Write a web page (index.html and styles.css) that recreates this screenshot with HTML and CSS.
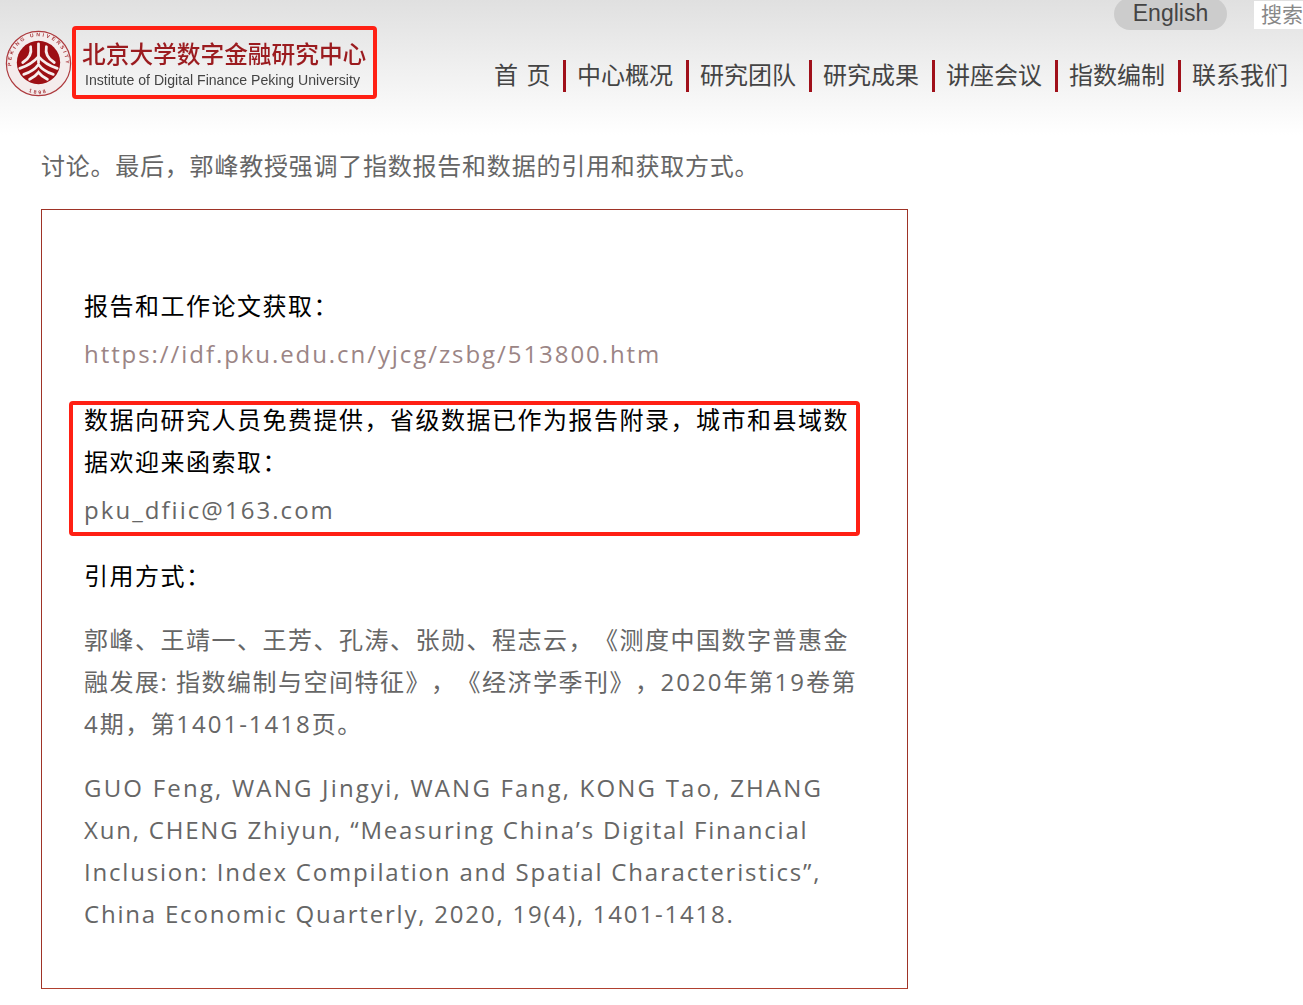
FILE: index.html
```html
<!DOCTYPE html>
<html lang="zh-CN">
<head>
<meta charset="utf-8">
<title>北京大学数字金融研究中心</title>
<link rel="stylesheet" href="styles.css">
</head>
<body>
<header class="site-header">
  <div class="brand">
    <svg class="seal" viewBox="0 0 68 68" aria-hidden="true">
      <defs>
        <path id="ring-top" d="M34 61.6a27.6 27.6 0 1 1 0 -55.2a27.6 27.6 0 1 1 0 55.2"/>
        <path id="ring-bottom" d="M8 34 a26 31 0 0 0 52 0"/>
      </defs>
      <circle cx="34" cy="34" r="32.6" fill="#f4ecec" stroke="#ad3a3e" stroke-width="1.2"/>
      <text class="seal-text" text-anchor="middle"><textPath href="#ring-top" startOffset="50%">PEKING UNIVERSITY</textPath></text>
      <text class="seal-text" text-anchor="middle"><textPath href="#ring-bottom" startOffset="50%">1898</textPath></text>
      <circle cx="34" cy="33" r="22" fill="#9d0f14"/>
      <g fill="none" stroke="#f7eeee" stroke-width="2.8" stroke-linecap="round">
        <path d="M34 14V33"/>
        <path d="M26 17Q28 27 18 33"/>
        <path d="M42 17Q40 27 50 33"/>
        <path d="M15 39Q27 35 34 27Q41 35 53 39"/>
        <path d="M19 45Q29 42 34 35Q39 42 49 45"/>
        <path d="M25 50Q31 47 34 43Q37 47 43 50"/>
      </g>
    </svg>
    <div class="brand-text">
      <div class="brand-zh">北京大学数字金融研究中心</div>
      <div class="brand-en">Institute of Digital Finance Peking University</div>
    </div>
  </div>
  <div class="header-right">
    <div class="tools">
      <a class="lang">English</a>
      <div class="search">搜索</div>
    </div>
    <nav class="nav">
      <a class="nav-item">首 页</a>
      <a class="nav-item">中心概况</a>
      <a class="nav-item">研究团队</a>
      <a class="nav-item">研究成果</a>
      <a class="nav-item">讲座会议</a>
      <a class="nav-item">指数编制</a>
      <a class="nav-item">联系我们</a>
    </nav>
  </div>
</header>
<main class="content">
  <p class="intro">讨论。最后，郭峰教授强调了指数报告和数据的引用和获取方式。</p>
  <section class="panel">
    <p class="label">报告和工作论文获取：</p>
    <p class="value link">https://idf.pku.edu.cn/yjcg/zsbg/513800.htm</p>
    <p class="label gap">数据向研究人员免费提供，省级数据已作为报告附录，城市和县域数据欢迎来函索取：</p>
    <p class="value">pku_dfiic@163.com</p>
    <p class="label gap">引用方式：</p>
    <p class="cite">郭峰、王靖一、王芳、孔涛、张勋、程志云，《测度中国数字普惠金融发展: 指数编制与空间特征》，《经济学季刊》，<span class="num">2020</span>年第<span class="num">19</span>卷第<span class="num">4</span>期，第<span class="num">1401-1418</span>页。</p>
    <p class="cite cite-en"><span class="caps">GUO Feng, WANG Jingyi, WANG Fang, KONG Tao, ZHANG</span> Xun, CHENG Zhiyun, “Measuring China’s Digital Financial Inclusion: Index Compilation and Spatial Characteristics”, China Economic Quarterly, 2020, 19(4), 1401-1418.</p>
  </section>
</main>
<div class="mark mark-logo"></div>
<div class="mark mark-data"></div>
</body>
</html>
```
FILE: styles.css
```css
* { box-sizing: border-box; }
html, body { margin: 0; padding: 0; }
body {
  width: 1303px;
  height: 1005px;
  overflow: hidden;
  position: relative;
  background: #fff;
  font-family: "Open Sans", "Noto Sans CJK SC", sans-serif;
  font-size: 24px;
  color: #666;
  text-spacing-trim: space-all;
}
p { margin: 0; }

.site-header {
  height: 135px;
  display: flex;
  justify-content: space-between;
  background: linear-gradient(#e0e0e0, #fff);
}
.brand {
  display: flex;
  align-items: flex-start;
  padding: 30px 0 0 5px;
}
.seal { width: 67px; height: 67px; display: block; flex: none; filter: blur(0.35px); }
.seal-text { font: bold 5.2px "Liberation Sans", sans-serif; fill: #a9383c; letter-spacing: 2.3px; }
.brand-text { margin: 8px 0 0 10px; width: 290px; filter: blur(0.35px); }
.brand-zh {
  font: 500 23.7px/30px "Noto Sans CJK SC", sans-serif;
  color: #9b1b1f;
  white-space: nowrap;
}
.brand-en {
  margin: 3px 0 0 3px;
  font: 14.1px/18px "Liberation Sans", sans-serif;
  color: #444;
  white-space: nowrap;
}

.header-right { display: flex; flex-direction: column; align-items: flex-end; }
.tools { display: flex; align-items: flex-start; height: 60px; }
.lang {
  width: 113px;
  height: 32px;
  margin-top: -2px;
  border-radius: 16px;
  background: #ccc;
  color: #444;
  font: 23px/30px "Liberation Sans", sans-serif;
  text-align: center;
}
.search {
  width: 49px;
  height: 28px;
  margin: 1px 0 0 27px;
  padding-left: 7px;
  background: #fff;
  color: #888;
  font: 21px/25px "Noto Sans CJK SC", sans-serif;
  white-space: nowrap;
}
.nav { display: flex; padding-right: 2px; }
.nav-item {
  width: 123px;
  height: 32px;
  padding-right: 2px;
  border-left: 3px solid #a0101a;
  color: #444;
  font: 24px/27px "Noto Sans CJK SC", sans-serif;
  text-align: center;
  white-space: pre;
}
.nav-item:first-child { border-left: 0; width: 69px; padding-right: 0; text-align: left; word-spacing: 3px; }

.content { padding: 0 0 0 41px; }
.intro {
  font-size: 24px;
  letter-spacing: 0.77px;
  line-height: 42px;
  margin-top: 10px;
  white-space: nowrap;
}
.panel {
  width: 867px;
  height: 780px;
  margin-top: 22px;
  padding: 75px 48px 0 42px;
  border: 1px solid #9e3327;
  border-bottom-color: #b0402f;
  letter-spacing: 1.5px;
  line-height: 42px;
}
.label { color: #000; }
.value { margin-top: 6px; letter-spacing: 2.05px; }
.link { color: #9b8585; letter-spacing: 1.93px; }
.gap { margin-top: 24px; }
.cite { margin-top: 22px; }
.num { letter-spacing: 2px; }
.cite-en { letter-spacing: 1.8px; }
.caps { letter-spacing: 2.2px; }

.mark {
  position: absolute;
  border: 4px solid #ff2014;
  border-radius: 4px;
  pointer-events: none;
}
.mark-logo { left: 72px; top: 26px; width: 305px; height: 73px; }
.mark-data { left: 69px; top: 401px; width: 791px; height: 135px; }
```
